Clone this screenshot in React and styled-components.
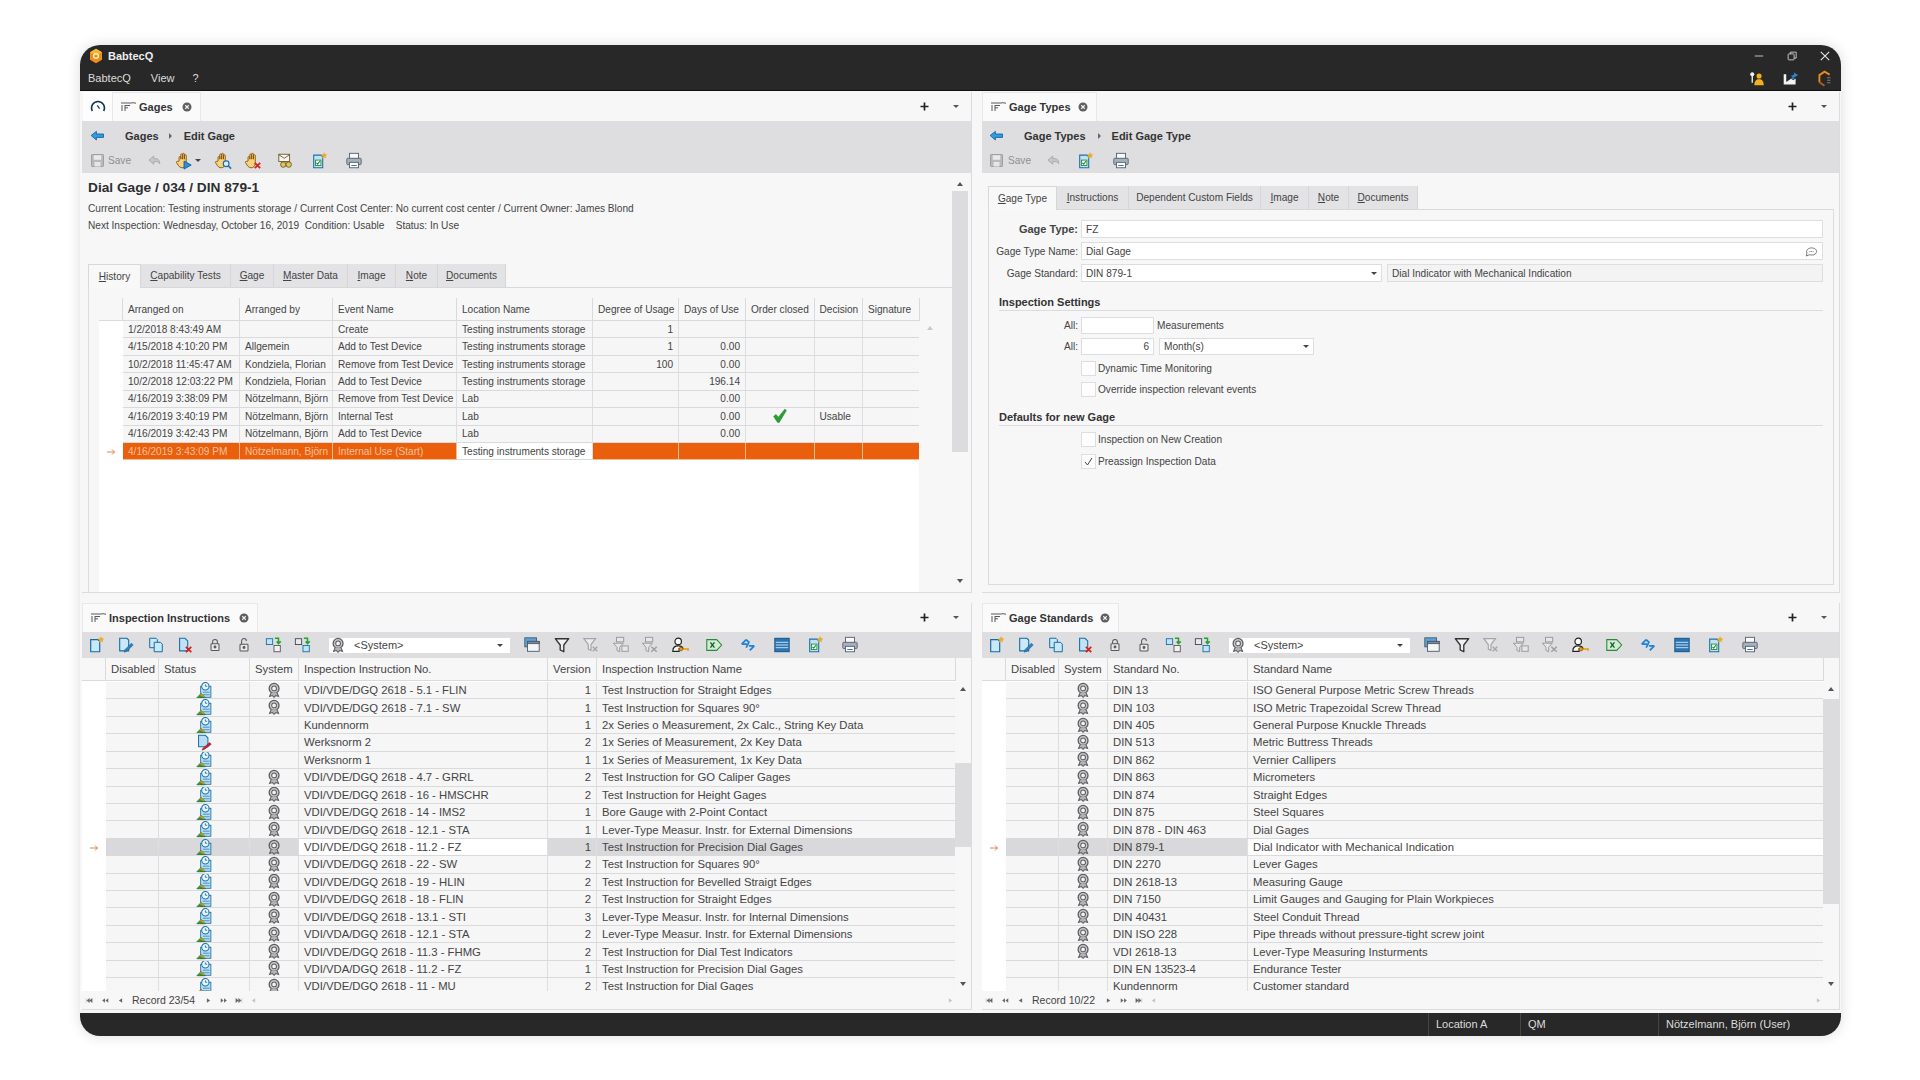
import React from "react";
import styled, { createGlobalStyle } from "styled-components";

const FONT = `"Liberation Sans", "Noto Sans", sans-serif`;

const GlobalStyle = createGlobalStyle`
  html, body {
    margin: 0;
    background: #fff;
    overflow: hidden;
  }
  * { box-sizing: border-box; }
`;

const Page = styled.div`
  width: 1920px;
  height: 1080px;
  padding: 45px 0 0 80px;
  font-family: ${FONT};
  font-size: 10.1px;
  color: #444;
`;

const AppWindow = styled.div`
  width: 1761px;
  height: 991px;
  border-radius: 20px;
  overflow: hidden;
  background: #f7f7f8;
  display: flex;
  flex-direction: column;
  box-shadow: 0 0 14px rgba(0, 0, 0, 0.14);
`;

const TitleBar = styled.div`
  height: 46px;
  background: #282828;
  border-bottom: 1px solid #111;
  color: #e6e6e6;
  display: flex;
  flex-direction: column;
`;

const TitleRow = styled.div`
  height: ${({ $h }) => $h}px;
  display: flex;
  align-items: center;
  padding-left: 8px;
  font-size: 11px;
`;

const AppName = styled.span`
  font-weight: 700;
  margin-left: 4px;
  color: #eee;
`;

const MenuItem = styled.span`
  margin-right: ${({ $gap }) => $gap}px;
  color: #ddd;
`;

const RowSpacer = styled.div`
  flex: 1;
`;

const TitleButton = styled.div`
  width: ${({ $w = 33 }) => $w}px;
  display: flex;
  justify-content: center;
  align-items: center;
`;

const Workspace = styled.div`
  flex: 1;
  display: grid;
  grid-template-columns: 890px 858px;
  grid-template-rows: 501px 407px;
  gap: 10px;
  padding: 1px 0 3px 2px;
`;

const Panel = styled.section`
  display: flex;
  flex-direction: column;
  min-width: 0;
  min-height: 0;
  border-right: 1px solid #dcdcde;
  border-bottom: 1px solid #dcdcde;
`;

const TabStrip = styled.div`
  height: 29px;
  flex: none;
  display: flex;
  align-items: stretch;
`;

const HomeTab = styled.div`
  width: 29px;
  margin-left: 1px;
  background: #fdfdfd;
  display: flex;
  align-items: center;
  justify-content: center;
`;

const DocTab = styled.div`
  width: ${({ $w }) => $w}px;
  background: #fafafb;
  border: 1px solid #e8e8ea;
  border-bottom: none;
  display: flex;
  align-items: center;
  padding: 0 8px 1px;
  font-size: 11px;
  font-weight: 700;
  color: #333;
`;

const DocTabLabel = styled.span`
  margin-left: 3px;
  flex: 1;
`;

const StripButton = styled.div`
  width: ${({ $w }) => $w}px;
  display: flex;
  align-items: center;
  justify-content: center;
`;

const StripEnd = styled.div`
  margin-left: auto;
  display: flex;
`;

const ToolArea = styled.div`
  flex: none;
  background: #dedee0;
  display: flex;
  flex-direction: column;
`;

const ToolRow = styled.div`
  height: ${({ $h }) => $h}px;
  padding-bottom: ${({ $pb = 0 }) => $pb}px;
  display: flex;
  align-items: center;
`;

const Crumb = styled.span`
  font-size: 11px;
  font-weight: 700;
  color: #333;
  margin-left: ${({ $ml }) => $ml}px;
`;

const CrumbArrow = styled.span`
  width: 0;
  height: 0;
  margin-left: ${({ $ml }) => $ml}px;
  border-left: 3px solid #666;
  border-top: 3px solid transparent;
  border-bottom: 3px solid transparent;
`;

const ToolButton = styled.div`
  flex: none;
  width: ${({ $w }) => $w}px;
  margin-left: ${({ $ml = 0 }) => $ml}px;
  display: flex;
  align-items: center;
  justify-content: center;
`;

const SaveLabel = styled.span`
  color: #8e8e90;
  margin-left: ${({ $ml = 0 }) => $ml}px;
`;

const SmallCaret = styled.span`
  width: 0;
  height: 0;
  flex: none;
  margin-left: ${({ $ml = 0 }) => $ml}px;
  border-top: 3px solid ${({ $color = "#444" }) => $color};
  border-left: 3px solid transparent;
  border-right: 3px solid transparent;
`;

const SystemSelect = styled.div`
  flex: none;
  width: 181px;
  height: 15px;
  margin-left: 11px;
  background: #fff;
  display: flex;
  align-items: center;
  padding: 0 7px 0 1px;
  font-size: 11px;
`;

const SelectText = styled.span`
  margin-left: 7px;
  flex: 1;
`;

const PanelBody = styled.div`
  flex: 1;
  min-height: 0;
  display: flex;
`;

const DetailPane = styled.div`
  flex: 1;
  min-width: 0;
  padding-left: 6px;
  display: flex;
  flex-direction: column;
`;

const DetailTitle = styled.h1`
  margin: 7px 0 0;
  font-size: 13.7px;
  line-height: 16px;
  font-weight: 700;
  color: #2e2e30;
`;

const DetailLine = styled.div`
  margin-top: ${({ $mt }) => $mt}px;
  line-height: 14px;
  white-space: pre;
`;

const PageTabs = styled.div`
  display: flex;
  height: 24px;
  flex: none;
  margin-top: ${({ $mt }) => $mt}px;
  border-bottom: 1px solid #d8d8da;
`;

const PageTab = styled.div`
  width: ${({ $w }) => $w}px;
  background: ${({ $active }) => ($active ? "#f8f8f9" : "#e3e3e5")};
  border-right: 1px solid #d6d6d8;
  ${({ $active }) => $active && "border-left: 1px solid #d8d8da; border-top: 1px solid #d8d8da; height: 24px;"}
  display: flex;
  align-items: center;
  justify-content: center;
`;

const Mnemonic = styled.span`
  text-decoration: underline;
  text-underline-offset: 1px;
  text-decoration-thickness: 1px;
`;

const HistoryBox = styled.div`
  flex: 1;
  min-height: 0;
  border-left: 1px solid #dcdcde;
  padding: 10px 0 0 10px;
  display: flex;
`;

const GridWrap = styled.div`
  width: ${({ $w }) => ($w ? `${$w}px` : "auto")};
  flex: ${({ $w }) => ($w ? "none" : "1")};
  min-width: 0;
  font-size: ${({ $fs }) => $fs}px;
  display: flex;
  flex-direction: column;
`;

const GridRow = styled.div`
  display: grid;
  grid-template-columns: ${({ $cols }) => $cols};
  height: ${({ $h = 17.43 }) => $h}px;
  flex: none;
`;

const HeadCell = styled.div`
  border-right: 1px solid #dadadc;
  border-bottom: 1px solid #dadadc;
  display: flex;
  align-items: center;
  padding: 0 5px;
  white-space: nowrap;
  overflow: hidden;
  background: #f7f7f8;
`;

const RowsArea = styled.div`
  flex: 1;
  min-height: 0;
  overflow: hidden;
  background: #fff;
  padding-top: ${({ $pt = 0 }) => $pt}px;
`;

const cellBg = { orange: "#ea5f0c", grey: "#d9d9db", focus: "#fff" };
const cellText = { orange: "#f7c19c", focus: "#444" };

const Cell = styled.div`
  background: ${({ $state }) => cellBg[$state] || "#f6f6f7"};
  color: ${({ $state }) => cellText[$state] || "#444"};
  border-right: 1px solid ${({ $state }) => ($state === "orange" ? "#f9b98f" : "#dedee0")};
  border-bottom: 1px solid ${({ $state }) => ($state === "grey" ? "#d9d9db" : $state === "orange" ? "#f9b98f" : "#dadadc")};
  display: flex;
  align-items: center;
  justify-content: ${({ $align = "flex-start" }) => $align};
  padding: 0 5px;
  white-space: nowrap;
  overflow: hidden;
`;

const IndicatorCell = styled.div`
  background: #fff;
  display: flex;
  align-items: center;
  justify-content: center;
`;

const InnerScroll = styled.div`
  width: 22px;
  padding-top: 28px;
  display: flex;
  justify-content: center;
  align-items: flex-start;
`;

const ScrollTrack = styled.div`
  flex: none;
  width: 16px;
  margin-right: ${({ $mr = 0 }) => $mr}px;
  display: flex;
  flex-direction: column;
  align-items: center;
  padding: ${({ $pad = "0" }) => $pad};
`;

const ArrowUp = styled.span`
  flex: none;
  width: 0;
  height: 0;
  border-bottom: 4px solid ${({ $color = "#555" }) => $color};
  border-left: 3px solid transparent;
  border-right: 3px solid transparent;
`;

const ArrowDown = styled.span`
  flex: none;
  width: 0;
  height: 0;
  margin-top: auto;
  border-top: 4px solid #555;
  border-left: 3px solid transparent;
  border-right: 3px solid transparent;
`;

const Thumb = styled.div`
  flex: none;
  width: 100%;
  height: ${({ $h }) => $h}px;
  margin-top: ${({ $top }) => $top}px;
  background: #dcdcde;
`;

const TabBox = styled.div`
  flex: 1;
  margin: 13px 5px 7px 6px;
  display: flex;
  flex-direction: column;
  min-height: 0;
`;

const FormBox = styled.div`
  flex: 1;
  border: 1px solid #dcdcde;
  border-top: none;
  padding: 10px 10px 0 0;
`;

const FieldRow = styled.div`
  display: flex;
  align-items: center;
  height: ${({ $h = 18 }) => $h}px;
  margin-top: ${({ $mt = 4 }) => $mt}px;
`;

const FieldLabel = styled.label`
  width: 88px;
  flex: none;
  margin-left: 1px;
  margin-right: 3px;
  text-align: right;
  font-size: ${({ $bold }) => ($bold ? "11px" : "inherit")};
  font-weight: ${({ $bold }) => ($bold ? 700 : 400)};
  white-space: nowrap;
`;

const TextBox = styled.div`
  flex: ${({ $w }) => ($w ? "none" : "1")};
  width: ${({ $w }) => ($w ? `${$w}px` : "auto")};
  height: 100%;
  margin-left: ${({ $ml = 0 }) => $ml}px;
  background: ${({ $readonly }) => ($readonly ? "#f3f3f4" : "#fff")};
  border: 1px solid #dedee0;
  display: flex;
  align-items: center;
  justify-content: ${({ $right }) => ($right ? "flex-end" : "space-between")};
  padding: 0 4px;
`;

const SectionHead = styled.div`
  margin: 14px 0 0 10px;
  height: 15px;
  line-height: 13px;
  font-size: 11px;
  font-weight: 700;
  color: #333;
  border-bottom: 1px solid #dcdcde;
`;

const AfterLabel = styled.span`
  margin-left: 3px;
`;

const CheckBox = styled.div`
  flex: none;
  width: 15px;
  height: 15px;
  margin-left: 92px;
  background: #fdfdfd;
  border: 1px solid #dedee0;
  display: flex;
  align-items: center;
  justify-content: center;
`;

const CheckLabel = styled.span`
  margin-left: 2px;
`;

const PagerBar = styled.div`
  flex: none;
  height: 18px;
  display: flex;
  align-items: center;
  padding-right: 15px;
  font-size: 10.5px;
`;

const PagerText = styled.span`
  margin: 0 6px 0 4px;
`;

const PagerGlyph = styled.span`
  flex: none;
  width: ${({ $w = 15 }) => $w}px;
  display: flex;
  justify-content: center;
`;

const StatusBar = styled.footer`
  height: 23px;
  background: #282828;
  color: #ddd;
  font-size: 11px;
  display: flex;
  justify-content: flex-end;
`;

const StatusCell = styled.div`
  width: ${({ $w }) => $w}px;
  border-left: 1px solid #454545;
  padding: 0 0 1px 7px;
  display: flex;
  align-items: center;
`;

const Svg = styled.svg`
  flex: none;
  display: block;
`;

const docBase = (
  <path d="M4 2.500h6l3 3v11H4z" fill="#bfe3f6" stroke="#1d6fa5" strokeWidth="1.200" />
);
const star = <path d="M14.500 0l1.100 2.400 2.500.4-1.800 1.800.5 2.500-2.300-1.200-2.300 1.200.5-2.500-1.800-1.800 2.500-.4z" fill="#e8ac2e" />;
const handShape = (
  <path
    d="M4.500 10V6a1 1 0 0 1 2 0v2-5a1 1 0 0 1 2 0v5-5.500a1 1 0 0 1 2 0V8V4a1 1 0 0 1 2 0v8.500c0 3-2 5-4.500 5-2 0-3-1-4-2.200L1.800 12c-.8-1 .5-2.200 1.500-1.300z"
    fill="#f7d27f"
    stroke="#8a5200"
    strokeWidth="1"
    strokeLinejoin="round"
  />
);
const sealShape = (
  <g fill="none" stroke="#5c5c60">
    <circle cx="9.500" cy="7.500" r="5.800" fill="#c9c9cb" strokeWidth="1.500" />
    <circle cx="9.500" cy="7.500" r="2.800" fill="#f3f3f3" strokeWidth="1.200" />
    <path d="M6 12.500l-1.800 4.500 3.300-1 2 2 2-2 3.300 1-1.800-4.500" fill="#b3b3b5" strokeWidth="1.200" />
  </g>
);
const printerShape = (
  <g stroke="#5f6a78" strokeWidth="1.100">
    <rect x="5" y="1.500" width="10" height="6" fill="#fafafa" />
    <rect x="2" y="7" width="16" height="7" rx="1" fill="#a9b0ba" />
    <rect x="5" y="11.500" width="10" height="6" fill="#fff" />
    <path d="M7 15h6" stroke="#2b78b8" />
  </g>
);
const newCheckDoc = (
  <g>
    <path d="M3 3.500h8l2 2v12H3z" fill="#bfe3f6" stroke="#1d6fa5" strokeWidth="1.200" />
    <rect x="5" y="9" width="6" height="6" fill="#fff" stroke="#2a8a3a" />
    <path d="M6 12l1.500 1.500L10 10" stroke="#1f9a33" strokeWidth="1.300" fill="none" />
    {star}
  </g>
);

const glyphs = {
  home: (
    <g fill="none" stroke="#12354f" strokeWidth="2">
      <path d="M3 15a8 8 0 1 1 14 0" />
      <path d="M9 8l3 4" strokeWidth="1.500" />
    </g>
  ),
  back: <path d="M1.500 10l7-5.500V8H18v4.500H8.500V16z" fill="#2f9de2" stroke="#0f5b99" strokeWidth="1.100" />,
  save: (
    <g>
      <rect x="2" y="2" width="16" height="16" rx="1" fill="#b9b9bb" stroke="#909092" />
      <rect x="5" y="3" width="10" height="6" fill="#e9e9ea" />
      <rect x="6" y="12" width="8" height="6" fill="#e6e6e7" />
    </g>
  ),
  undo: <path d="M9 4L2.500 9.500 9 15v-3.500h3c2 0 4 1 5 3 .5-4-2-7-5-7H9z" fill="#c6c6c8" stroke="#a2a2a4" />,
  handRun: (
    <g>
      {handShape}
      <path d="M10 10l8 4.500-8 4.500z" fill="#2a8fd6" stroke="#125f9c" />
    </g>
  ),
  handSearch: (
    <g>
      {handShape}
      <circle cx="13.500" cy="13" r="3.200" fill="#d7effc" stroke="#1b6ea8" strokeWidth="1.300" />
      <path d="M16 15.500l3 3" stroke="#1b6ea8" strokeWidth="1.800" />
    </g>
  ),
  handX: (
    <g>
      {handShape}
      <path d="M12 12l6 6M18 12l-6 6" stroke="#d8231c" strokeWidth="2" />
    </g>
  ),
  mailLink: (
    <g stroke="#6c5a20">
      <rect x="2" y="2.500" width="12" height="8" fill="#f5f5f5" />
      <path d="M2 3l6 4 6-4" fill="none" />
      <circle cx="7" cy="14" r="3" fill="#e4c460" />
      <circle cx="13" cy="14" r="3" fill="#e4c460" />
    </g>
  ),
  newCheck: newCheckDoc,
  printer: printerShape,
  docNew: (
    <g>
      <path d="M3 4h8l2 2v11.500H3z" fill="#c9e9f9" stroke="#156aa3" strokeWidth="1.300" />
      {star}
    </g>
  ),
  docEdit: (
    <g>
      <path d="M3 2.500h8l2 2v12H3z" fill="#c9e9f9" stroke="#156aa3" strokeWidth="1.200" />
      <path d="M9 15l7-7 2 2-7 7-3 1z" fill="#2f82bf" stroke="#17598c" strokeWidth=".6" />
    </g>
  ),
  docCopy: (
    <g stroke="#156aa3" strokeWidth="1.100" fill="#c9e9f9">
      <path d="M3 2.500h7l1.500 1.500v9H3z" />
      <path d="M8 7h7l2 2v8.500H8z" />
    </g>
  ),
  docDelete: (
    <g>
      {docBase}
      <path d="M11 12l6 6M17 12l-6 6" stroke="#d8231c" strokeWidth="2" />
    </g>
  ),
  lock: (
    <g fill="none" stroke="#58585a" strokeWidth="1.300">
      <rect x="5" y="8.500" width="10" height="8.500" rx="1" fill="#e9e9ea" />
      <path d="M7 8.500V6a3 3 0 0 1 6 0v2.500" />
      <circle cx="10" cy="12.500" r="1.200" fill="#58585a" />
    </g>
  ),
  unlock: (
    <g fill="none" stroke="#58585a" strokeWidth="1.300">
      <rect x="5" y="9" width="10" height="8.500" rx="1" fill="#e9e9ea" />
      <path d="M7 9V5a3 3 0 0 1 6 0" />
      <circle cx="10" cy="13" r="1.200" fill="#58585a" />
    </g>
  ),
  importA: (
    <g>
      <rect x="1.500" y="3" width="7" height="6.500" fill="#bfe3f6" stroke="#1d6fa5" />
      <rect x="10" y="10.500" width="7" height="7" fill="#f1f1f1" stroke="#58585a" />
      <path d="M11 2.500h4v5M13 6l2 2.500L17.500 6" fill="none" stroke="#2aa12f" strokeWidth="1.700" />
    </g>
  ),
  importB: (
    <g>
      <rect x="1.500" y="3" width="7" height="6.500" fill="#e9e9e9" stroke="#38485a" />
      <rect x="10" y="10.500" width="7" height="7" fill="#bfe3f6" stroke="#1d6fa5" />
      <path d="M11 2.500h4v5M13 6l2 2.500L17.500 6" fill="none" stroke="#2aa12f" strokeWidth="1.700" />
    </g>
  ),
  windows: (
    <g stroke="#4a5a68">
      <rect x="2" y="2" width="13" height="10" fill="#5aa3da" />
      <rect x="5" y="6" width="13" height="11" fill="#f5f5f5" />
      <rect x="5" y="6" width="13" height="2.500" fill="#7d8a96" />
    </g>
  ),
  filter: <path d="M2.500 3h15L12 10v7.500l-4-2V10z" fill="#f0f0f0" stroke="#333" strokeWidth="1.500" strokeLinejoin="round" />,
  filterX: (
    <g>
      <path d="M2 3h13l-5 6.500V16l-3-1.500v-5z" fill="#ececec" stroke="#a5a5a8" strokeWidth="1.300" />
      <path d="M12 12l5 5M17 12l-5 5" stroke="#a5a5a8" strokeWidth="1.500" />
    </g>
  ),
  filterAdd: (
    <g fill="#e6e6e8" stroke="#9b9b9e" strokeWidth="1.100">
      <rect x="5" y="1.500" width="8" height="5" />
      <path d="M1.500 8h11l-4 4.500v5l-3-1.500v-3.500z" />
      <rect x="11" y="11" width="7" height="6" />
    </g>
  ),
  filterDel: (
    <g fill="#e6e6e8" stroke="#9b9b9e" strokeWidth="1.100">
      <rect x="5" y="1.500" width="8" height="5" />
      <path d="M1.500 8h11l-4 4.500v5l-3-1.500v-3.500z" />
      <path d="M11.500 12l6 5.500M17.500 12l-6 5.500" strokeWidth="1.500" />
    </g>
  ),
  personKey: (
    <g>
      <circle cx="8" cy="6" r="3.600" fill="#fbfbfb" stroke="#222" strokeWidth="1.300" />
      <path d="M2 17c0-4 2.500-6 6-6s5 1.500 5.500 3H9v3z" fill="#fbfbfb" stroke="#222" strokeWidth="1.300" />
      <circle cx="11" cy="14.500" r="2" fill="#e59b14" stroke="#9a5f00" />
      <path d="M13 14.500h6v2" stroke="#e59b14" strokeWidth="1.800" fill="none" />
    </g>
  ),
  excel: (
    <g>
      <path d="M2 4h11l5.500 6-5.500 6H2z" fill="#d3ecd3" stroke="#2a8a3a" strokeWidth="1.200" />
      <path d="M6 7l4.500 6M10.500 7L6 13" stroke="#12622b" strokeWidth="1.500" />
    </g>
  ),
  sync: (
    <g fill="none" stroke="#1f83d8" strokeWidth="2">
      <path d="M3 9l5-5M3 9h6" />
      <path d="M17 11l-5 5M17 11h-6" />
      <path d="M8 4l3 3-3 6" />
    </g>
  ),
  table: (
    <g>
      <rect x="2" y="2.500" width="16" height="15" fill="#2a75b3" stroke="#14507f" />
      <path d="M3 7h14M3 10h14M3 13h14" stroke="#d8ecf8" />
    </g>
  ),
  seal: sealShape,
  status: (
    <g>
      <rect x="5.500" y="5" width="12" height="13" fill="#b6dff5" stroke="#1d6fa5" />
      <path d="M8 12h8M8 15h8" stroke="#1d6fa5" strokeWidth=".8" />
      <circle cx="11" cy="5" r="4.300" fill="#e7f6fd" stroke="#1d6fa5" strokeWidth="1.200" />
      <path d="M11 2.800V5h2.200" stroke="#1d6fa5" fill="none" />
      <path d="M1 18.500l5-5 5 5z" fill="#2f9a3d" stroke="#176524" strokeWidth=".8" />
      <path d="M5 14.500l5 3" stroke="#d39216" strokeWidth="2" />
    </g>
  ),
  docPen: (
    <g>
      <path d="M3 1.500h8l3 3V15H3z" fill="#b6dff5" stroke="#1d6fa5" strokeWidth="1.200" />
      <path d="M8 17l8-7 2 2-8 6-3 1z" fill="#c6242b" stroke="#8f1219" strokeWidth=".6" />
    </g>
  ),
  check: <path d="M2 10.500l3-2.500 3 3.500L16 1.500l2 1.500L9 18H7z" fill="#2ba12f" stroke="#17751c" strokeWidth=".6" />,
  logo: (
    <g>
      <path d="M10 1l7.500 4.300v9.400L10 19l-7.500-4.300V5.300z" fill="#ef8f19" />
      <path d="M10 1l7.500 4.300L10 9.500 2.500 5.300z" fill="#f7b633" />
      <circle cx="10" cy="10" r="3" fill="none" stroke="#fff3d6" strokeWidth="1.500" />
    </g>
  ),
  minimize: <path d="M4 10h12" stroke="#ddd" strokeWidth="1.200" />,
  restore: (
    <g fill="none" stroke="#ddd" strokeWidth="1.200">
      <rect x="4.500" y="7" width="8.500" height="8.500" rx="1" />
      <path d="M7.500 7V4.500H16V13h-3" />
    </g>
  ),
  close: <path d="M4 4l12 12M16 4L4 16" stroke="#eee" strokeWidth="1.500" />,
  trayUser: (
    <g>
      <circle cx="5" cy="5" r="2.400" fill="#f2f2f2" />
      <path d="M5 7v8" stroke="#f2f2f2" strokeWidth="1.600" />
      <circle cx="13" cy="7" r="3" fill="#f2b01e" />
      <path d="M7.500 18c0-5 2-7 5.500-7s5.500 2 5.500 7z" fill="#f2b01e" />
    </g>
  ),
  trayMonitor: (
    <g>
      <path d="M2 5h3v9l6-4 2 2 3-2v7H2z" fill="#f3f3f3" />
      <path d="M10 7l4-1.500V3l5 3-5 3" fill="#2a83cc" />
      <path d="M15 11l-5 0 3-3" fill="#2a83cc" />
    </g>
  ),
  trayHex: (
    <g fill="none" strokeWidth="2.200">
      <path d="M4 14.500V6l6-4 6 3.500" stroke="#e98c1b" />
      <path d="M4 14.500l6 4" stroke="#c4571b" />
      <path d="M13 9h4M13 12h4M13 15h4" stroke="#7b7b7b" strokeWidth="1.200" />
    </g>
  ),
  stepFirst: <path d="M4 6v8M15 6l-5 4 5 4zM10 6l-5 4 5 4z" fill="#666" stroke="#666" strokeWidth=".5" />,
  stepPrevPage: <path d="M15 6l-5 4 5 4zM9 6l-5 4 5 4z" fill="#666" />,
  stepPrev: <path d="M13 6l-6 4 6 4z" fill="#666" />,
  stepNext: <path d="M7 6l6 4-6 4z" fill="#666" />,
  stepNextPage: <path d="M5 6l5 4-5 4zM11 6l5 4-5 4z" fill="#666" />,
  stepLast: <path d="M16 6v8M5 6l5 4-5 4zM10 6l5 4-5 4z" fill="#666" stroke="#666" strokeWidth=".5" />,
  stepLeftOff: <path d="M13 6l-6 4 6 4z" fill="#c4c4c6" />,
  stepRightOff: <path d="M7 6l6 4-6 4z" fill="#c4c4c6" />,
  rowArrow: <path d="M2 10h15M12 5l5 5-5 5" fill="none" stroke="#e8742a" strokeWidth="1.800" />,
  close2: (
    <g>
      <circle cx="10" cy="10" r="9" fill="#5f5f62" />
      <path d="M6.500 6.500l7 7M13.500 6.500l-7 7" stroke="#f4f4f4" strokeWidth="2.200" />
    </g>
  ),
  comment: (
    <g fill="none" stroke="#555" strokeWidth="1.200">
      <path d="M3 12.500C1 8 5 4.500 10 4.500s9 3 7.500 7-6.500 4.500-11 3.500L2 17z" />
      <path d="M7 10h6" strokeDasharray="1.500 1" />
    </g>
  ),
};

const Icon = ({ name, size = 18 }) => (
  <Svg width={size} height={size} viewBox="0 0 20 20">
    {glyphs[name]}
  </Svg>
);

const GageMark = () => (
  <Svg width="15" height="9" viewBox="0 0 15 9" fill="none" stroke="#59595c" strokeWidth="1">
    <path d="M0 1H11M11 .6L15 1.200" />
    <path d="M1 3V9M4 3V9M4 3.500H9M4 5.800H7" />
  </Svg>
);

const panelTab = (title, width) => (
  <DocTab $w={width}>
    <GageMark />
    <DocTabLabel>{title}</DocTabLabel>
    <Icon name="close2" size={10} />
  </DocTab>
);

const StripActions = () => (
  <StripEnd>
    <StripButton $w={31}>
      <Svg width="11" height="11" viewBox="0 0 11 11">
        <path d="M5.500 1.500v8M1.500 5.500h8" stroke="#222" strokeWidth="1.700" />
      </Svg>
    </StripButton>
    <StripButton $w={31}>
      <SmallCaret $color="#555" />
    </StripButton>
  </StripEnd>
);

const u = (first, rest) => (
  <>
    <Mnemonic>{first}</Mnemonic>
    {rest}
  </>
);

const historyCols = "24px 117px 93px 124px 136px 86px 67px 68.5px 48.5px 57px";
const historyHead = ["", "Arranged on", "Arranged by", "Event Name", "Location Name", "Degree of Usage", "Days of Use", "Order closed", "Decision", "Signature"];
const storage = "Testing instruments storage";
const bjoern = "Nötzelmann, Björn";
const florian = "Kondziela, Florian";
const historyRows = [
  ["1/2/2018 8:43:49 AM", "", "Create", storage, "1", "", false, ""],
  ["4/15/2018 4:10:20 PM", "Allgemein", "Add to Test Device", storage, "1", "0.00", false, ""],
  ["10/2/2018 11:45:47 AM", florian, "Remove from Test Device", storage, "100", "0.00", false, ""],
  ["10/2/2018 12:03:22 PM", florian, "Add to Test Device", storage, "", "196.14", false, ""],
  ["4/16/2019 3:38:09 PM", bjoern, "Remove from Test Device", "Lab", "", "0.00", false, ""],
  ["4/16/2019 3:40:19 PM", bjoern, "Internal Test", "Lab", "", "0.00", true, "Usable"],
  ["4/16/2019 3:42:43 PM", bjoern, "Add to Test Device", "Lab", "", "0.00", false, ""],
];

const VDE = "VDI/VDE/DGQ 2618 - ";
const VDA = "VDI/VDA/DGQ 2618 - ";
const instructionCols = "24px 53px 91px 49px 249px 49px 359px";
const instructionHead = ["", "Disabled", "Status", "System", "Inspection Instruction No.", "Version", "Inspection Instruction Name"];
const instructions = [
  [VDE + "5.1 - FLIN", "1", "Test Instruction for Straight Edges"],
  [VDE + "7.1 - SW", "1", "Test Instruction for Squares 90°"],
  ["Kundennorm", "1", "2x Series o Measurement, 2x Calc., String Key Data", "own"],
  ["Werksnorm 2", "2", "1x Series of Measurement, 2x Key Data", "draft"],
  ["Werksnorm 1", "1", "1x Series of Measurement, 1x Key Data", "own"],
  [VDE + "4.7 - GRRL", "2", "Test Instruction for GO Caliper Gages"],
  [VDE + "16 - HMSCHR", "2", "Test Instruction for Height Gages"],
  [VDE + "14 - IMS2", "1", "Bore Gauge with 2-Point Contact"],
  [VDE + "12.1 - STA", "1", "Lever-Type Measur. Instr. for External Dimensions"],
  [VDE + "11.2 - FZ", "1", "Test Instruction for Precision Dial Gages"],
  [VDE + "22 - SW", "2", "Test Instruction for Squares 90°"],
  [VDE + "19 - HLIN", "2", "Test Instruction for Bevelled Straigt Edges"],
  [VDE + "18 - FLIN", "2", "Test Instruction for Straight Edges"],
  [VDE + "13.1 - STI", "3", "Lever-Type Measur. Instr. for Internal Dimensions"],
  [VDA + "12.1 - STA", "2", "Lever-Type Measur. Instr. for External Dimensions"],
  [VDE + "11.3 - FHMG", "2", "Test Instruction for Dial Test Indicators"],
  [VDA + "11.2 - FZ", "1", "Test Instruction for Precision Dial Gages"],
  [VDE + "11 - MU", "2", "Test Instruction for Dial Gages"],
];

const standardCols = "24px 53px 49px 140px 576px";
const standardHead = ["", "Disabled", "System", "Standard No.", "Standard Name"];
const standards = [
  ["DIN 13", "ISO General Purpose Metric Screw Threads", true],
  ["DIN 103", "ISO Metric Trapezoidal Screw Thread", true],
  ["DIN 405", "General Purpose Knuckle Threads", true],
  ["DIN 513", "Metric Buttress Threads", true],
  ["DIN 862", "Vernier Callipers", true],
  ["DIN 863", "Micrometers", true],
  ["DIN 874", "Straight Edges", true],
  ["DIN 875", "Steel Squares", true],
  ["DIN 878 - DIN 463", "Dial Gages", true],
  ["DIN 879-1", "Dial Indicator with Mechanical Indication", true],
  ["DIN 2270", "Lever Gages", true],
  ["DIN 2618-13", "Measuring Gauge", true],
  ["DIN 7150", "Limit Gauges and Gauging for Plain Workpieces", true],
  ["DIN 40431", "Steel Conduit Thread", true],
  ["DIN ISO 228", "Pipe threads without pressure-tight screw joint", true],
  ["VDI 2618-13", "Lever-Type Measuring Insturments", true],
  ["DIN EN 13523-4", "Endurance Tester", false],
  ["Kundennorm", "Customer standard", false],
];

const GridHead = ({ cols, labels }) => (
  <GridRow $cols={cols} $h={23}>
    {labels.map((label, i) => (
      <HeadCell key={i}>{label}</HeadCell>
    ))}
  </GridRow>
);

const RowMarker = ({ on }) => <IndicatorCell>{on && <Icon name="rowArrow" size={10} />}</IndicatorCell>;

const GridToolbar = () => (
  <ToolRow $h={26}>
    <ToolButton $w={29.5}><Icon name="docNew" /></ToolButton>
    <ToolButton $w={29.5}><Icon name="docEdit" /></ToolButton>
    <ToolButton $w={29.5}><Icon name="docCopy" /></ToolButton>
    <ToolButton $w={29.5}><Icon name="docDelete" /></ToolButton>
    <ToolButton $w={29.5}><Icon name="lock" size={16} /></ToolButton>
    <ToolButton $w={29.5}><Icon name="unlock" size={16} /></ToolButton>
    <ToolButton $w={29.5}><Icon name="importA" /></ToolButton>
    <ToolButton $w={29.5}><Icon name="importB" /></ToolButton>
    <SystemSelect>
      <Icon name="seal" size={17} />
      <SelectText>&lt;System&gt;</SelectText>
      <SmallCaret />
    </SystemSelect>
    <ToolButton $w={30} $ml={7}><Icon name="windows" /></ToolButton>
    <ToolButton $w={29.5}><Icon name="filter" /></ToolButton>
    <ToolButton $w={29.5}><Icon name="filterX" /></ToolButton>
    <ToolButton $w={29.5}><Icon name="filterAdd" /></ToolButton>
    <ToolButton $w={29.5}><Icon name="filterDel" /></ToolButton>
    <ToolButton $w={29.5}><Icon name="personKey" /></ToolButton>
    <ToolButton $w={34} $ml={2}><Icon name="excel" /></ToolButton>
    <ToolButton $w={34}><Icon name="sync" /></ToolButton>
    <ToolButton $w={34}><Icon name="table" /></ToolButton>
    <ToolButton $w={34}><Icon name="newCheck" /></ToolButton>
    <ToolButton $w={34}><Icon name="printer" /></ToolButton>
  </ToolRow>
);

const Pager = ({ record }) => (
  <PagerBar>
    <PagerGlyph><Icon name="stepFirst" size={11} /></PagerGlyph>
    <PagerGlyph $w={16}><Icon name="stepPrevPage" size={11} /></PagerGlyph>
    <PagerGlyph><Icon name="stepPrev" size={11} /></PagerGlyph>
    <PagerText>Record {record}</PagerText>
    <PagerGlyph><Icon name="stepNext" size={11} /></PagerGlyph>
    <PagerGlyph><Icon name="stepNextPage" size={11} /></PagerGlyph>
    <PagerGlyph><Icon name="stepLast" size={11} /></PagerGlyph>
    <PagerGlyph><Icon name="stepLeftOff" size={11} /></PagerGlyph>
    <RowSpacer />
    <Icon name="stepRightOff" size={11} />
  </PagerBar>
);

const App = () => (
  <>
    <GlobalStyle />
    <Page>
      <AppWindow>
        <TitleBar>
          <TitleRow $h={21}>
            <Icon name="logo" size={16} />
            <AppName>BabtecQ</AppName>
            <RowSpacer />
            <TitleButton><Icon name="minimize" size={14} /></TitleButton>
            <TitleButton><Icon name="restore" size={14} /></TitleButton>
            <TitleButton><Icon name="close" size={14} /></TitleButton>
          </TitleRow>
          <TitleRow $h={24}>
            <MenuItem $gap={20}>BabtecQ</MenuItem>
            <MenuItem $gap={18}>View</MenuItem>
            <MenuItem $gap={0}>?</MenuItem>
            <RowSpacer />
            <TitleButton $w={34}><Icon name="trayUser" size={17} /></TitleButton>
            <TitleButton $w={34}><Icon name="trayMonitor" size={17} /></TitleButton>
            <TitleButton $w={34}><Icon name="trayHex" size={17} /></TitleButton>
          </TitleRow>
        </TitleBar>

        <Workspace>
          <Panel>
            <TabStrip>
              <HomeTab><Icon name="home" size={16} /></HomeTab>
              {panelTab("Gages", 89)}
              <StripActions />
            </TabStrip>
            <ToolArea>
              <ToolRow $h={29}>
                <ToolButton $w={30}><Icon name="back" size={15} /></ToolButton>
                <Crumb $ml={13}>Gages</Crumb>
                <CrumbArrow $ml={10} />
                <Crumb $ml={12}>Edit Gage</Crumb>
              </ToolRow>
              <ToolRow $h={23} $pb={2}>
                <ToolButton $w={22} $ml={4}><Icon name="save" size={15} /></ToolButton>
                <SaveLabel>Save</SaveLabel>
                <ToolButton $w={20} $ml={13}><Icon name="undo" size={15} /></ToolButton>
                <ToolButton $w={20} $ml={10}><Icon name="handRun" /></ToolButton>
                <SmallCaret $ml={1} />
                <ToolButton $w={20} $ml={12}><Icon name="handSearch" /></ToolButton>
                <ToolButton $w={20} $ml={10}><Icon name="handX" /></ToolButton>
                <ToolButton $w={20} $ml={13}><Icon name="mailLink" /></ToolButton>
                <ToolButton $w={20} $ml={14}><Icon name="newCheck" /></ToolButton>
                <ToolButton $w={20} $ml={14}><Icon name="printer" /></ToolButton>
              </ToolRow>
            </ToolArea>
            <PanelBody>
              <DetailPane>
                <DetailTitle>Dial Gage / 034 / DIN 879-1</DetailTitle>
                <DetailLine $mt={6}>
                  Current Location: Testing instruments storage / Current Cost Center: No current cost center / Current Owner: James Blond
                </DetailLine>
                <DetailLine $mt={3}>{"Next Inspection: Wednesday, October 16, 2019  Condition: Usable    Status: In Use"}</DetailLine>
                <PageTabs $mt={31}>
                  <PageTab $w={53} $active>{u("H", "istory")}</PageTab>
                  <PageTab $w={90}>{u("C", "apability Tests")}</PageTab>
                  <PageTab $w={43}>{u("G", "age")}</PageTab>
                  <PageTab $w={74}>{u("M", "aster Data")}</PageTab>
                  <PageTab $w={48}>{u("I", "mage")}</PageTab>
                  <PageTab $w={42}>{u("N", "ote")}</PageTab>
                  <PageTab $w={68}>{u("D", "ocuments")}</PageTab>
                </PageTabs>
                <HistoryBox>
                  <GridWrap $w={820} $fs={10.1}>
                    <GridHead cols={historyCols} labels={historyHead} />
                    <RowsArea>
                      {historyRows.map((row) => (
                        <GridRow $cols={historyCols} key={row[0]}>
                          <RowMarker />
                          <Cell>{row[0]}</Cell>
                          <Cell>{row[1]}</Cell>
                          <Cell>{row[2]}</Cell>
                          <Cell>{row[3]}</Cell>
                          <Cell $align="flex-end">{row[4]}</Cell>
                          <Cell $align="flex-end">{row[5]}</Cell>
                          <Cell $align="center">{row[6] && <Icon name="check" size={16} />}</Cell>
                          <Cell>{row[7]}</Cell>
                          <Cell />
                        </GridRow>
                      ))}
                      <GridRow $cols={historyCols}>
                        <RowMarker on />
                        <Cell $state="orange">4/16/2019 3:43:09 PM</Cell>
                        <Cell $state="orange">{bjoern}</Cell>
                        <Cell $state="orange">Internal Use (Start)</Cell>
                        <Cell $state="focus">{storage}</Cell>
                        <Cell $state="orange" />
                        <Cell $state="orange" />
                        <Cell $state="orange" />
                        <Cell $state="orange" />
                        <Cell $state="orange" />
                      </GridRow>
                    </RowsArea>
                  </GridWrap>
                  <InnerScroll><ArrowUp $color="#c8c8ca" /></InnerScroll>
                </HistoryBox>
              </DetailPane>
              <ScrollTrack $pad="9px 0 9px" $mr={3}>
                <ArrowUp />
                <Thumb $top={5} $h={261} />
                <ArrowDown />
              </ScrollTrack>
            </PanelBody>
          </Panel>

          <Panel>
            <TabStrip>
              {panelTab("Gage Types", 115)}
              <StripActions />
            </TabStrip>
            <ToolArea>
              <ToolRow $h={29}>
                <ToolButton $w={29}><Icon name="back" size={15} /></ToolButton>
                <Crumb $ml={13}>Gage Types</Crumb>
                <CrumbArrow $ml={12} />
                <Crumb $ml={11}>Edit Gage Type</Crumb>
              </ToolRow>
              <ToolRow $h={23} $pb={2}>
                <ToolButton $w={20} $ml={4}><Icon name="save" size={15} /></ToolButton>
                <SaveLabel $ml={2}>Save</SaveLabel>
                <ToolButton $w={20} $ml={12}><Icon name="undo" size={15} /></ToolButton>
                <ToolButton $w={20} $ml={13}><Icon name="newCheck" /></ToolButton>
                <ToolButton $w={20} $ml={15}><Icon name="printer" /></ToolButton>
              </ToolRow>
            </ToolArea>
            <TabBox>
              <PageTabs $mt={0}>
                <PageTab $w={69} $active>{u("G", "age Type")}</PageTab>
                <PageTab $w={72}>{u("I", "nstructions")}</PageTab>
                <PageTab $w={132}>Dependent Custom Fields</PageTab>
                <PageTab $w={48}>{u("I", "mage")}</PageTab>
                <PageTab $w={40}>{u("N", "ote")}</PageTab>
                <PageTab $w={69}>{u("D", "ocuments")}</PageTab>
              </PageTabs>
              <FormBox>
                <FieldRow $mt={0}>
                  <FieldLabel $bold>Gage Type:</FieldLabel>
                  <TextBox>FZ</TextBox>
                </FieldRow>
                <FieldRow>
                  <FieldLabel>Gage Type Name:</FieldLabel>
                  <TextBox>Dial Gage<Icon name="comment" size={13} /></TextBox>
                </FieldRow>
                <FieldRow>
                  <FieldLabel>Gage Standard:</FieldLabel>
                  <TextBox $w={301}>DIN 879-1<SmallCaret /></TextBox>
                  <TextBox $ml={5} $readonly>Dial Indicator with Mechanical Indication</TextBox>
                </FieldRow>
                <SectionHead>Inspection Settings</SectionHead>
                <FieldRow $h={17} $mt={6}>
                  <FieldLabel>All:</FieldLabel>
                  <TextBox $w={73} />
                  <AfterLabel>Measurements</AfterLabel>
                </FieldRow>
                <FieldRow $h={17}>
                  <FieldLabel>All:</FieldLabel>
                  <TextBox $w={73} $right>6</TextBox>
                  <TextBox $w={155} $ml={5}>Month(s)<SmallCaret /></TextBox>
                </FieldRow>
                <FieldRow $h={15} $mt={6}>
                  <CheckBox />
                  <CheckLabel>Dynamic Time Monitoring</CheckLabel>
                </FieldRow>
                <FieldRow $h={15} $mt={6}>
                  <CheckBox />
                  <CheckLabel>Override inspection relevant events</CheckLabel>
                </FieldRow>
                <SectionHead>Defaults for new Gage</SectionHead>
                <FieldRow $h={15} $mt={6}>
                  <CheckBox />
                  <CheckLabel>Inspection on New Creation</CheckLabel>
                </FieldRow>
                <FieldRow $h={15} $mt={7}>
                  <CheckBox>
                    <Svg width="9" height="9" viewBox="0 0 9 9">
                      <path d="M1 5l2.500 3L8 1" fill="none" stroke="#444" strokeWidth="1" />
                    </Svg>
                  </CheckBox>
                  <CheckLabel>Preassign Inspection Data</CheckLabel>
                </FieldRow>
              </FormBox>
            </TabBox>
          </Panel>

          <Panel>
            <TabStrip>
              {panelTab("Inspection Instructions", 176)}
              <StripActions />
            </TabStrip>
            <ToolArea><GridToolbar /></ToolArea>
            <PanelBody>
              <GridWrap $fs={11.3}>
                <GridHead cols={instructionCols} labels={instructionHead} />
                <RowsArea $pt={1}>
                  {instructions.map((row, i) => {
                    const selected = i === 9;
                    const state = selected ? "grey" : undefined;
                    return (
                      <GridRow $cols={instructionCols} key={i}>
                        <RowMarker on={selected} />
                        <Cell $state={state} />
                        <Cell $state={state} $align="center">
                          <Icon name={row[3] === "draft" ? "docPen" : "status"} size={17} />
                        </Cell>
                        <Cell $state={state} $align="center">{!row[3] && <Icon name="seal" size={17} />}</Cell>
                        <Cell $state={selected ? "focus" : undefined}>{row[0]}</Cell>
                        <Cell $state={state} $align="flex-end">{row[1]}</Cell>
                        <Cell $state={state}>{row[2]}</Cell>
                      </GridRow>
                    );
                  })}
                </RowsArea>
              </GridWrap>
              <ScrollTrack $pad="29px 0 5px">
                <ArrowUp />
                <Thumb $top={72} $h={84} />
                <ArrowDown />
              </ScrollTrack>
            </PanelBody>
            <Pager record="23/54" />
          </Panel>

          <Panel>
            <TabStrip>
              {panelTab("Gage Standards", 137)}
              <StripActions />
            </TabStrip>
            <ToolArea><GridToolbar /></ToolArea>
            <PanelBody>
              <GridWrap $fs={11.3}>
                <GridHead cols={standardCols} labels={standardHead} />
                <RowsArea $pt={1}>
                  {standards.map((row, i) => {
                    const selected = i === 9;
                    const state = selected ? "grey" : undefined;
                    return (
                      <GridRow $cols={standardCols} key={i}>
                        <RowMarker on={selected} />
                        <Cell $state={state} />
                        <Cell $state={state} $align="center">{row[2] && <Icon name="seal" size={17} />}</Cell>
                        <Cell $state={state}>{row[0]}</Cell>
                        <Cell $state={selected ? "focus" : undefined}>{row[1]}</Cell>
                      </GridRow>
                    );
                  })}
                </RowsArea>
              </GridWrap>
              <ScrollTrack $pad="29px 0 5px">
                <ArrowUp />
                <Thumb $top={8} $h={205} />
                <ArrowDown />
              </ScrollTrack>
            </PanelBody>
            <Pager record="10/22" />
          </Panel>
        </Workspace>

        <StatusBar>
          <StatusCell $w={92}>Location A</StatusCell>
          <StatusCell $w={138}>QM</StatusCell>
          <StatusCell $w={183}>Nötzelmann, Björn (User)</StatusCell>
        </StatusBar>
      </AppWindow>
    </Page>
  </>
);

export default App;
